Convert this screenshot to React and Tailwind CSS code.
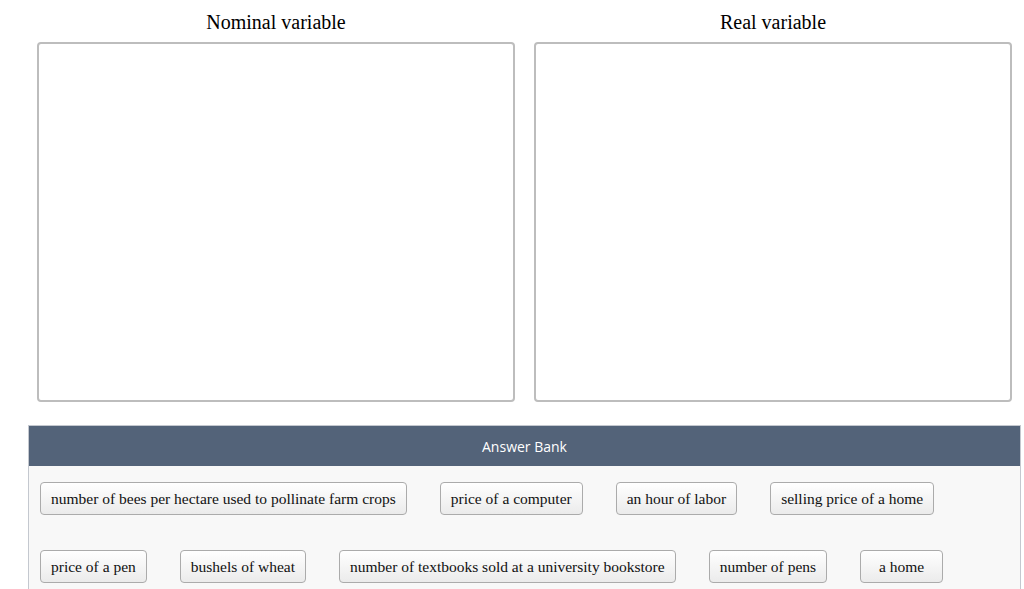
import React from 'react';

const rowOne = [
    'number of bees per hectare used to pollinate farm crops',
    'price of a computer',
    'an hour of labor',
    'selling price of a home',
];

const rowTwo = [
    'price of a pen',
    'bushels of wheat',
    'number of textbooks sold at a university bookstore',
    'number of pens',
    'a home',
];

const serif = { fontFamily: '"Liberation Serif", "Times New Roman", serif' };

const DropZone = ({ title }) => (
    <div className="flex flex-col w-[478px]">
        <div className="h-[24px] leading-[24px] text-center text-[20px] text-black" style={serif}>
            {title}
        </div>
        <div className="mt-[8px] h-[360px] border-2 border-[#bdbdbd] rounded-[4px] bg-white"></div>
    </div>
);

const Chip = ({ label }) => (
    <div
        className="h-[33px] px-[10px] min-w-[83px] flex items-center justify-center rounded-[4px] border border-[#ababab] bg-gradient-to-b from-white to-[#ebebeb] text-[15.5px] text-[#111] whitespace-nowrap"
        style={serif}
    >
        {label}
    </div>
);

export default function App() {
    return (
        <div className="w-[1024px] h-[589px] overflow-hidden bg-white">
            <div className="pt-[10px] pl-[37px] flex gap-[19px]">
                <DropZone title="Nominal variable" />
                <DropZone title="Real variable" />
            </div>

            <div className="mt-[23px] ml-[28px] w-[993px] border border-[#c4c8cf] bg-[#f8f8f8]">
                <div
                    className="h-[40px] bg-[#536379] text-white text-[14px] flex items-center justify-center"
                    style={{ fontFamily: '"Open Sans", "Liberation Sans", sans-serif' }}
                >
                    Answer Bank
                </div>
                <div className="pt-[16px] pl-[11px] pb-[20px] flex flex-col gap-[35px]">
                    <div className="flex gap-[33px]">
                        {rowOne.map((t) => (
                            <Chip key={t} label={t} />
                        ))}
                    </div>
                    <div className="flex gap-[33px]">
                        {rowTwo.map((t) => (
                            <Chip key={t} label={t} />
                        ))}
                    </div>
                </div>
            </div>
        </div>
    );
}
